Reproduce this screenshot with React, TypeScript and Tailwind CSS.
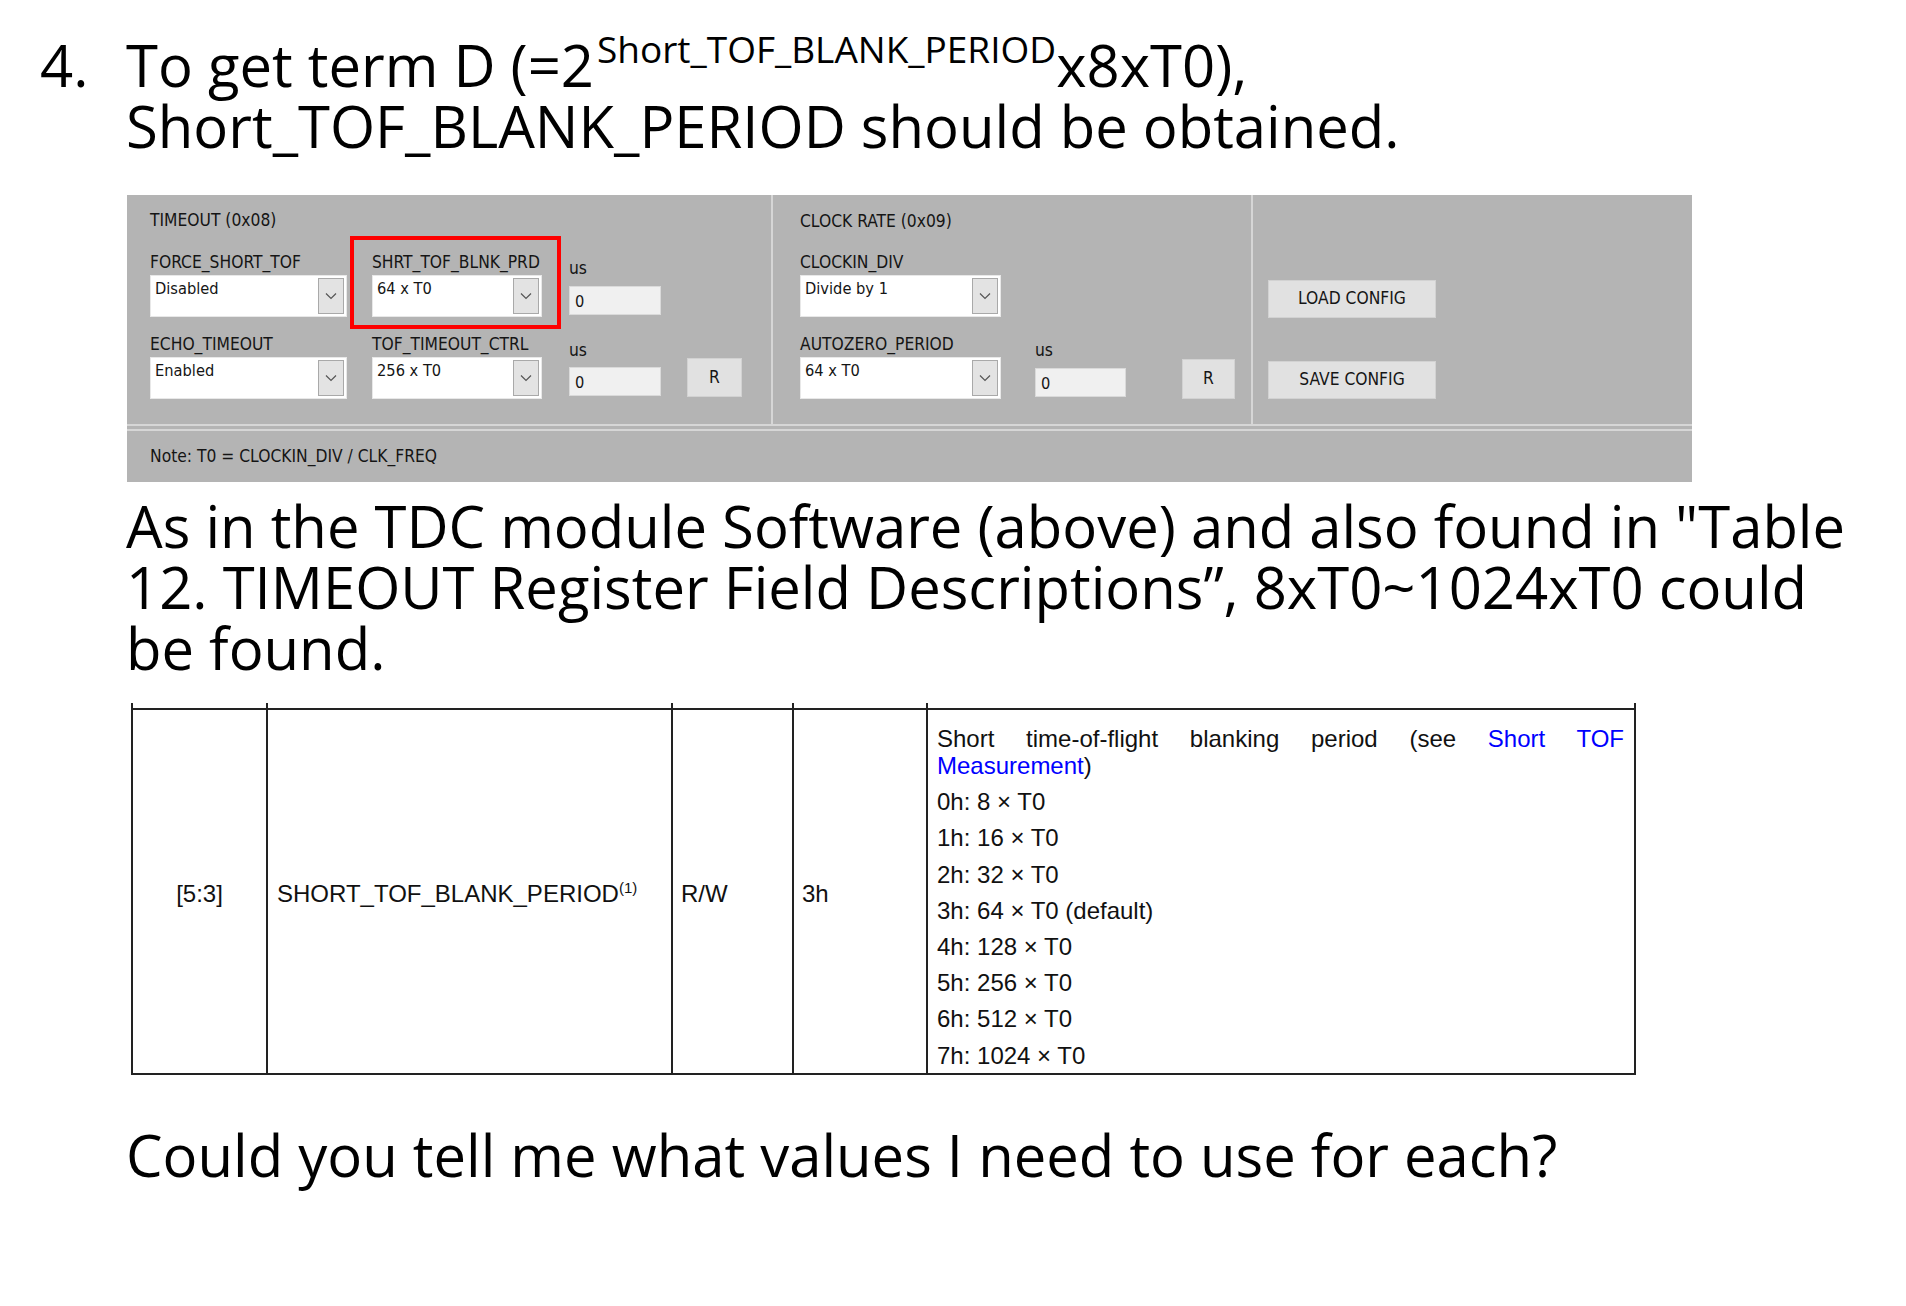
import React from "react";

const ui = "font-['DejaVu_Sans_Condensed','DejaVu_Sans',sans-serif] text-[17.3px] text-[#151515]";

function Chevron() {
  return (
    <svg width="12" height="8" viewBox="0 0 12 8" className="block">
      <polyline points="1,1.5 6,6.5 11,1.5" fill="none" stroke="#555" strokeWidth="1.2" />
    </svg>
  );
}

function Combo({ value, width }: { value: string; width: string }) {
  return (
    <div className={`${width} h-[42px] bg-white border border-[#e8e8e8] flex`}>
      <div className="flex-1 pl-[4px] pt-[4px] leading-[18px] text-[16.3px] whitespace-nowrap">{value}</div>
      <div className="w-[26px] my-[2px] mr-[2px] bg-[#e3e3e3] border border-[#a9a9a9] flex items-center justify-center">
        <Chevron />
      </div>
    </div>
  );
}

function Field({ label, value, width }: { label: string; value: string; width: string }) {
  return (
    <div className="flex flex-col">
      <div className="h-[18px] leading-[18px] whitespace-nowrap">{label}</div>
      <div className="mt-[4px]">
        <Combo value={value} width={width} />
      </div>
    </div>
  );
}

function UsInput({ width, gap }: { width: string; gap: string }) {
  return (
    <div className="flex flex-col pt-[6px]">
      <div className="h-[18px] leading-[18px]">us</div>
      <div className={`${gap} ${width} h-[29px] bg-[#f0f0f0] border border-[#dadada] pl-[5px] pt-[6px] leading-[18px] text-[16.3px]`}>0</div>
    </div>
  );
}

function Btn({ label, cls }: { label: string; cls: string }) {
  return (
    <div className={`${cls} bg-[#e1e1e1] border border-[#d2d2d2] flex items-center justify-center whitespace-nowrap`}>
      {label}
    </div>
  );
}

function Panel() {
  return (
    <div className={`ml-[127px] mt-[39px] w-[1565px] h-[287px] bg-[#b4b4b4] flex flex-col ${ui}`}>
      <div className="h-[229px] flex">
        {/* TIMEOUT */}
        <div className="w-[644px] pl-[23px] pt-[16px]">
          <div className="h-[18px] leading-[18px]">TIMEOUT (0x08)</div>
          <div className="mt-[24px] flex">
            <div className="w-[222px]">
              <Field label="FORCE_SHORT_TOF" value="Disabled" width="w-[197px]" />
            </div>
            <div className="w-[197px] relative">
              <Field label="SHRT_TOF_BLNK_PRD" value="64 x T0" width="w-[170px]" />
              <div className="absolute left-[-22px] top-[-17px] w-[211px] h-[93px] border-[4px] border-[#ff0000]" />
            </div>
            <UsInput width="w-[92px]" gap="mt-[9px]" />
          </div>
          <div className="mt-[18px] flex">
            <div className="w-[222px]">
              <Field label="ECHO_TIMEOUT" value="Enabled" width="w-[197px]" />
            </div>
            <div className="w-[197px]">
              <Field label="TOF_TIMEOUT_CTRL" value="256 x T0" width="w-[170px]" />
            </div>
            <div className="w-[118px]">
              <UsInput width="w-[92px]" gap="mt-[8px]" />
            </div>
            <div className="pt-[23px]">
              <Btn label="R" cls="w-[55px] h-[39px]" />
            </div>
          </div>
        </div>
        <div className="w-[2px] bg-[#d6d6d6]" />
        {/* CLOCK RATE */}
        <div className="w-[478px] pl-[27px] pt-[17px]">
          <div className="h-[18px] leading-[18px]">CLOCK RATE (0x09)</div>
          <div className="mt-[23px] flex">
            <Field label="CLOCKIN_DIV" value="Divide by 1" width="w-[201px]" />
          </div>
          <div className="mt-[18px] flex">
            <div className="w-[235px]">
              <Field label="AUTOZERO_PERIOD" value="64 x T0" width="w-[201px]" />
            </div>
            <div className="w-[147px]">
              <UsInput width="w-[91px]" gap="mt-[9px]" />
            </div>
            <div className="pt-[24px]">
              <Btn label="R" cls="w-[53px] h-[40px]" />
            </div>
          </div>
        </div>
        <div className="w-[2px] bg-[#d6d6d6]" />
        {/* CONFIG */}
        <div className="flex-1 pl-[15px] pt-[85px] flex flex-col">
          <Btn label="LOAD CONFIG" cls="w-[168px] h-[38px]" />
          <div className="mt-[43px]">
            <Btn label="SAVE CONFIG" cls="w-[168px] h-[38px]" />
          </div>
        </div>
      </div>
      <div className="h-[2px] bg-[#d6d6d6]" />
      <div className="h-[3px]" />
      <div className="h-[2px] bg-[#d6d6d6]" />
      <div className="flex-1 pl-[23px] flex items-center">Note: T0 = CLOCKIN_DIV / CLK_FREQ</div>
    </div>
  );
}

const lines = ["0h: 8 × T0", "1h: 16 × T0", "2h: 32 × T0", "3h: 64 × T0 (default)", "4h: 128 × T0", "5h: 256 × T0", "6h: 512 × T0", "7h: 1024 × T0"];

function RegTable() {
  const cell = "border-l-2 border-[#222]";
  return (
    <div className="ml-[131px] mt-[25px] w-[1505px] font-['Liberation_Sans',Arial,sans-serif] text-[24px] text-[#111]">
      <div className="h-[5px] flex">
        <div className={`w-[135px] ${cell}`} />
        <div className={`w-[405px] ${cell}`} />
        <div className={`w-[121px] ${cell}`} />
        <div className={`w-[134px] ${cell}`} />
        <div className={`flex-1 ${cell} border-r-2`} />
      </div>
      <div className="h-[367px] flex border-t-2 border-b-2 border-[#222]">
        <div className={`w-[135px] ${cell} flex items-center justify-center pt-[4px]`}>[5:3]</div>
        <div className={`w-[405px] ${cell} flex items-center pl-[9px] pt-[4px]`}>
          <span className="whitespace-nowrap">
            SHORT_TOF_BLANK_PERIOD<sup className="text-[15px] relative -top-[9px]">(1)</sup>
          </span>
        </div>
        <div className={`w-[121px] ${cell} flex items-center pl-[8px] pt-[4px]`}>R/W</div>
        <div className={`w-[134px] ${cell} flex items-center pl-[8px] pt-[4px]`}>3h</div>
        <div className={`flex-1 ${cell} border-r-2 pl-[9px] pr-[10px] pt-[15px] flex flex-col leading-[27px]`}>
          <div className="[text-align-last:justify] text-justify">
            Short time-of-flight blanking period (see <span className="text-[#0000ff]">Short TOF</span>
          </div>
          <div>
            <span className="text-[#0000ff]">Measurement</span>)
          </div>
          {lines.map((l) => (
            <div key={l} className="mt-[9.2px]">
              {l}
            </div>
          ))}
        </div>
      </div>
    </div>
  );
}

export default function App() {
  return (
    <div className="w-[1906px] h-[1306px] bg-white text-black font-['Open_Sans',sans-serif] overflow-hidden">
      <div className="pt-[34px] flex text-[58px] leading-[61px]">
        <div className="w-[126px] pl-[40px]">4.</div>
        <div>
          <div className="whitespace-nowrap">
            To get term D (=2
            <span className="inline-block align-top text-[37px] leading-none -mt-[4px] ml-[3px]">Short_TOF_BLANK_PERIOD</span>
            x8xT0),
          </div>
          <div className="whitespace-nowrap">Short_TOF_BLANK_PERIOD should be obtained.</div>
        </div>
      </div>
      <Panel />
      <div className="ml-[126px] mt-[13px] text-[58px] leading-[61px] whitespace-nowrap">
        <div>As in the TDC module Software (above) and also found in "Table</div>
        <div>12. TIMEOUT Register Field Descriptions”, 8xT0~1024xT0 could</div>
        <div>be found.</div>
      </div>
      <RegTable />
      <div className="ml-[126px] mt-[49px] text-[58px] leading-[61px] whitespace-nowrap">
        Could you tell me what values I need to use for each?
      </div>
    </div>
  );
}
